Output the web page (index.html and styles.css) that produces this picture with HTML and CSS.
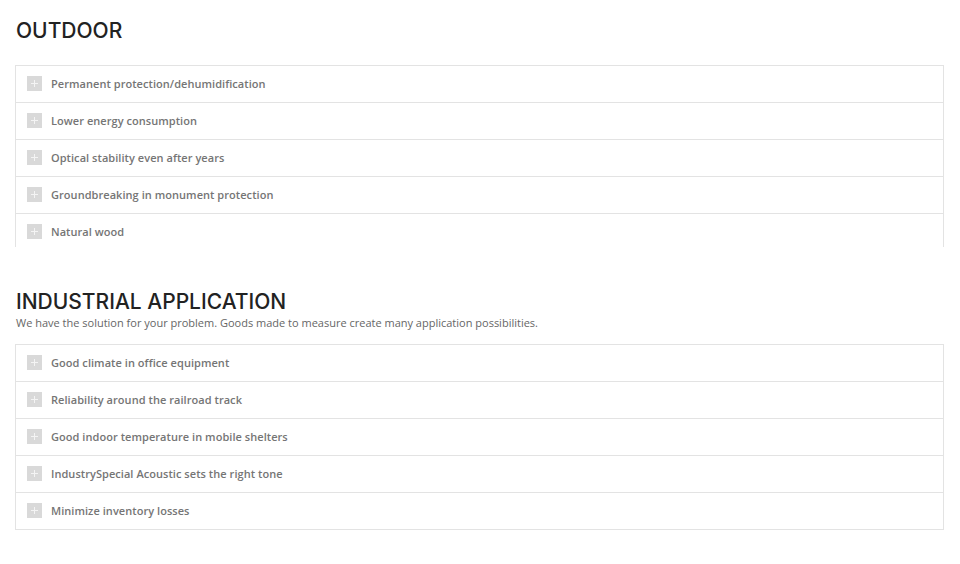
FILE: index.html
```html
<!DOCTYPE html>
<html>
<head>
<meta charset="utf-8">
<link rel="stylesheet" href="styles.css">
</head>
<body>
<section class="block">
  <h2 class="title">OUTDOOR</h2>
  <div class="accordion clipped">
    <div class="item"><span class="plus"></span><span class="label">Permanent protection/dehumidification</span></div>
    <div class="item"><span class="plus"></span><span class="label">Lower energy consumption</span></div>
    <div class="item"><span class="plus"></span><span class="label">Optical stability even after years</span></div>
    <div class="item"><span class="plus"></span><span class="label">Groundbreaking in monument protection</span></div>
    <div class="item"><span class="plus"></span><span class="label">Natural wood</span></div>
  </div>
</section>
<section class="block second">
  <h2 class="title">INDUSTRIAL APPLICATION</h2>
  <p class="sub">We have the solution for your problem. Goods made to measure create many application possibilities.</p>
  <div class="accordion">
    <div class="item"><span class="plus"></span><span class="label">Good climate in office equipment</span></div>
    <div class="item"><span class="plus"></span><span class="label">Reliability around the railroad track</span></div>
    <div class="item"><span class="plus"></span><span class="label">Good indoor temperature in mobile shelters</span></div>
    <div class="item"><span class="plus"></span><span class="label">IndustrySpecial Acoustic sets the right tone</span></div>
    <div class="item"><span class="plus"></span><span class="label">Minimize inventory losses</span></div>
  </div>
</section>
</body>
</html>
```
FILE: styles.css
```css
html, body {
  margin: 0;
  padding: 0;
  background: #fff;
}
body {
  padding: 0 16px 0 15px;
  font-family: "Open Sans", "Liberation Sans", sans-serif;
}
.block {
  display: flex;
  flex-direction: column;
}
.title {
  margin: 0;
  font-family: "Inter", "Open Sans", sans-serif;
  font-weight: 500;
  font-size: 21px;
  line-height: 26px;
  color: #222;
  padding: 18px 0 0 1px;
  letter-spacing: 0;
}
.block:first-child .title {
  margin-bottom: 21px;
}
.second {
  margin-top: 42px;
}
.second .title {
  padding-top: 0;
}
.sub {
  margin: 0 0 13px 1px;
  font-size: 11px;
  line-height: 16px;
  color: #666;
}
.accordion {
  display: flex;
  flex-direction: column;
}
.clipped {
  height: 182px;
  overflow: hidden;
}
.item {
  display: flex;
  align-items: center;
  height: 34px;
  padding-bottom: 2px;
  border: 1px solid #e3e3e3;
  margin-top: -1px;
  padding-left: 11px;
  flex-shrink: 0;
}
.item:first-child {
  margin-top: 0;
}
.clipped .item:last-child {
  border-bottom: none;
}
.plus {
  position: relative;
  width: 15px;
  height: 15px;
  background: #d9d9d9;
  margin-right: 9px;
  margin-top: 1px;
  flex-shrink: 0;
}
.plus::before, .plus::after {
  content: "";
  position: absolute;
  background: #f4f4f4;
}
.plus::before {
  left: 4px;
  top: 7px;
  width: 7px;
  height: 1px;
}
.plus::after {
  left: 7px;
  top: 4px;
  width: 1px;
  height: 7px;
}
.label {
  font-size: 11px;
  font-weight: 600;
  color: #757575;
  letter-spacing: 0.05px;
}
```
